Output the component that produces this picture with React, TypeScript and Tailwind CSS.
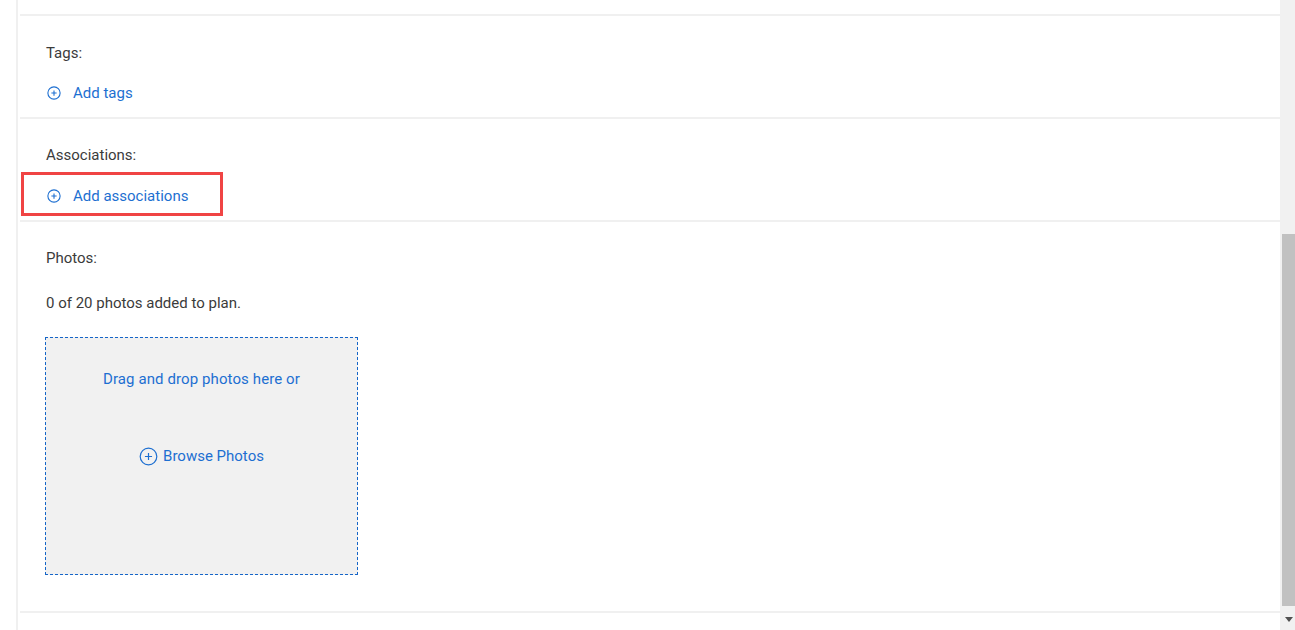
import React from "react";

function CirclePlus({ size, stroke }: { size: number; stroke: number }) {
  return (
    <svg width={size} height={size} viewBox="0 0 24 24" fill="none" stroke="currentColor" strokeWidth={stroke}>
      <circle cx="12" cy="12" r="10.5" />
      <path d="M12 7.5v9M7.5 12h9" />
    </svg>
  );
}

function Divider() {
  return <div className="h-[2px] bg-[#f0f0f0]" />;
}

export default function App() {
  return (
    <div
      className="flex h-[630px] w-[1295px] overflow-hidden bg-white text-[15px] text-[#3b3b3b]"
      style={{ fontFamily: "Roboto, 'Liberation Sans', sans-serif" }}
    >
      <div className="w-[16px] shrink-0 bg-white" />
      <div className="w-[2px] shrink-0 bg-[#f0f0f0]" />
      <div className="flex flex-1 flex-col pl-[2px]">
        <div className="h-[14px]" />
        <Divider />
        {/* Tags */}
        <div className="flex h-[101px] flex-col pl-[26px] pt-[27px]">
          <div className="leading-[20px]">Tags:</div>
          <div className="mt-[20px] flex items-center leading-[20px] text-[#1d6fd1]">
            <span className="ml-[1px] mr-[12px] flex"><CirclePlus size={14} stroke={1.9} /></span>
            <span>Add tags</span>
          </div>
        </div>
        <Divider />
        {/* Associations */}
        <div className="flex h-[101px] flex-col pl-[26px] pt-[26px]">
          <div className="leading-[20px]">Associations:</div>
          <div className="relative mt-[21px] flex items-center leading-[20px] text-[#1d6fd1]">
            <span className="ml-[1px] mr-[12px] flex"><CirclePlus size={14} stroke={1.9} /></span>
            <span>Add associations</span>
            <div className="pointer-events-none absolute left-[-25px] top-[-14px] h-[44px] w-[202px] border-[3px] border-[#f04444]" />
          </div>
        </div>
        <Divider />
        {/* Photos */}
        <div className="flex h-[389px] flex-col pl-[25px] pt-[26px]">
          <div className="pl-[1px] leading-[20px]">Photos:</div>
          <div className="mt-[25px] pl-[1px] leading-[20px]">0 of 20 photos added to plan.</div>
          <div className="mt-[24px] flex h-[238px] w-[313px] flex-col items-center border border-dashed border-[#1565c8] bg-[#f1f1f1] pt-[31px] text-[#1d6fd1]">
            <div className="leading-[20px] tracking-[0.1px]">Drag and drop photos here or</div>
            <div className="mt-[57px] flex items-center leading-[20px]">
              <span className="mr-[5px] flex"><CirclePlus size={19} stroke={1.5} /></span>
              <span>Browse Photos</span>
            </div>
          </div>
        </div>
        <Divider />
      </div>
      {/* scrollbar */}
      <div className="flex w-[15px] shrink-0 flex-col bg-[#f1f1f1]">
        <div className="h-[234px]" />
        <div className="ml-[2px] h-[372px] bg-[#c1c1c1]" />
        <div className="flex flex-1 items-center justify-center pl-[2px] pt-[2px]">
          <svg width="8" height="5" viewBox="0 0 8 5"><path d="M0 0h8L4 5z" fill="#505050" /></svg>
        </div>
      </div>
    </div>
  );
}
